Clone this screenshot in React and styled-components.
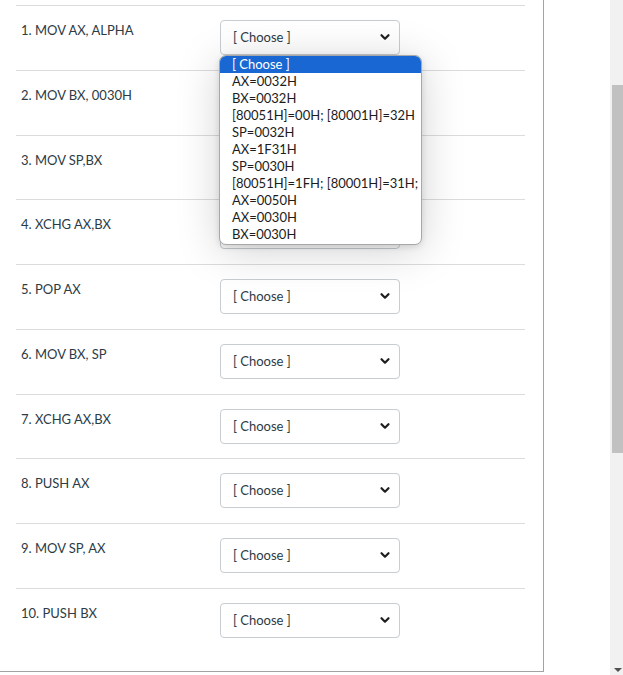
import React from 'react';
import styled, {createGlobalStyle} from 'styled-components';

const GlobalStyle = createGlobalStyle`
  html, body {
    margin: 0;
    padding: 0;
    background: #fff;
  }
  body {
    font-family: Lato, "Open Sans", sans-serif;
    color: #2d3b45;
  }
`;

const questions = [
    '1. MOV AX, ALPHA',
    '2. MOV BX, 0030H',
    '3. MOV SP,BX',
    '4. XCHG AX,BX',
    '5. POP AX',
    '6. MOV BX, SP',
    '7. XCHG AX,BX',
    '8. PUSH AX',
    '9. MOV SP, AX',
    '10. PUSH BX',
];

const choices = [
    '[ Choose ]',
    'AX=0032H',
    'BX=0032H',
    '[80051H]=00H; [80001H]=32H',
    'SP=0032H',
    'AX=1F31H',
    'SP=0030H',
    '[80051H]=1FH; [80001H]=31H;',
    'AX=0050H',
    'AX=0030H',
    'BX=0030H',
];

const Page = styled.div`
  display: flex;
  height: 675px;
  overflow: hidden;
`;

const Viewport = styled.div`
  flex: 1;
`;

const Panel = styled.div`
  width: 544px;
  height: 672px;
  box-sizing: border-box;
  border-right: 1px solid #a3a3a3;
  border-bottom: 1px solid #a3a3a3;
  padding: 5px 18px 0 16px;
`;

const Row = styled.div`
  display: flex;
  align-items: flex-start;
  height: 64.75px;
  box-sizing: border-box;
  border-top: 1px solid #dcdcdc;
  padding: 14px 0 0 5px;
`;

const Label = styled.div`
  width: 199px;
  font-size: 13px;
  line-height: 20px;
  color: #2d3b45;
`;

const SelectWrap = styled.div`
  position: relative;
`;

const SelectBox = styled.div`
  width: 180px;
  height: 35px;
  box-sizing: border-box;
  border: 1px solid #c7cdd1;
  border-radius: 4px;
  background: #fff;
  display: flex;
  align-items: center;
  justify-content: space-between;
  padding: 0 8px 1px 12px;
  font-size: 13px;
  color: #2d3b45;
`;

const Chevron = () => (
    <svg width="12" height="12" viewBox="0 0 12 12">
        <path d="M2.5 4.2 L6 7.7 L9.5 4.2" fill="none" stroke="#1f1f1f" strokeWidth="2.2" strokeLinecap="round" strokeLinejoin="round"/>
    </svg>
);

const Dropdown = styled.ul`
  position: absolute;
  top: 35px;
  left: -1px;
  width: 201px;
  margin: 0;
  padding: 0 0 1px;
  list-style: none;
  background: #fff;
  border: 1px solid #a8a8a8;
  border-radius: 7px;
  overflow: hidden;
  box-shadow: 0 6px 44px rgba(0, 0, 0, 0.18), 0 2px 6px rgba(0, 0, 0, 0.12);
  z-index: 5;
`;

const Option = styled.li`
  font-size: 13px;
  line-height: 17px;
  height: 17px;
  padding-left: 12px;
  white-space: nowrap;
  color: ${p => (p.$active ? '#fff' : '#1c1c1c')};
  background: ${p => (p.$active ? '#1967d2' : 'transparent')};
`;

const Scrollbar = styled.div`
  width: 13px;
  background: #f1f1f1;
  display: flex;
  flex-direction: column;
  align-items: flex-end;
`;

const Thumb = styled.div`
  margin-top: 85px;
  width: 11px;
  height: 368px;
  background: #c1c1c1;
`;

const Spacer = styled.div`
  flex: 1;
`;

const DownArrow = styled.div`
  width: 0;
  height: 0;
  margin: 0 1px 3px 0;
  border-left: 4px solid transparent;
  border-right: 4px solid transparent;
  border-top: 4px solid #505050;
`;

const App = () => {
    return (
        <Page>
            <GlobalStyle/>
            <Viewport>
                <Panel>
                    {questions.map((q, i) => (
                        <Row key={q}>
                            <Label>{q}</Label>
                            <SelectWrap>
                                <SelectBox>
                                    <span>[ Choose ]</span>
                                    <Chevron/>
                                </SelectBox>
                                {i === 0 && (
                                    <Dropdown>
                                        {choices.map((c, j) => (
                                            <Option key={c} $active={j === 0}>{c}</Option>
                                        ))}
                                    </Dropdown>
                                )}
                            </SelectWrap>
                        </Row>
                    ))}
                </Panel>
            </Viewport>
            <Scrollbar>
                <Thumb/>
                <Spacer/>
                <DownArrow/>
            </Scrollbar>
        </Page>
    );
};

export default App;
